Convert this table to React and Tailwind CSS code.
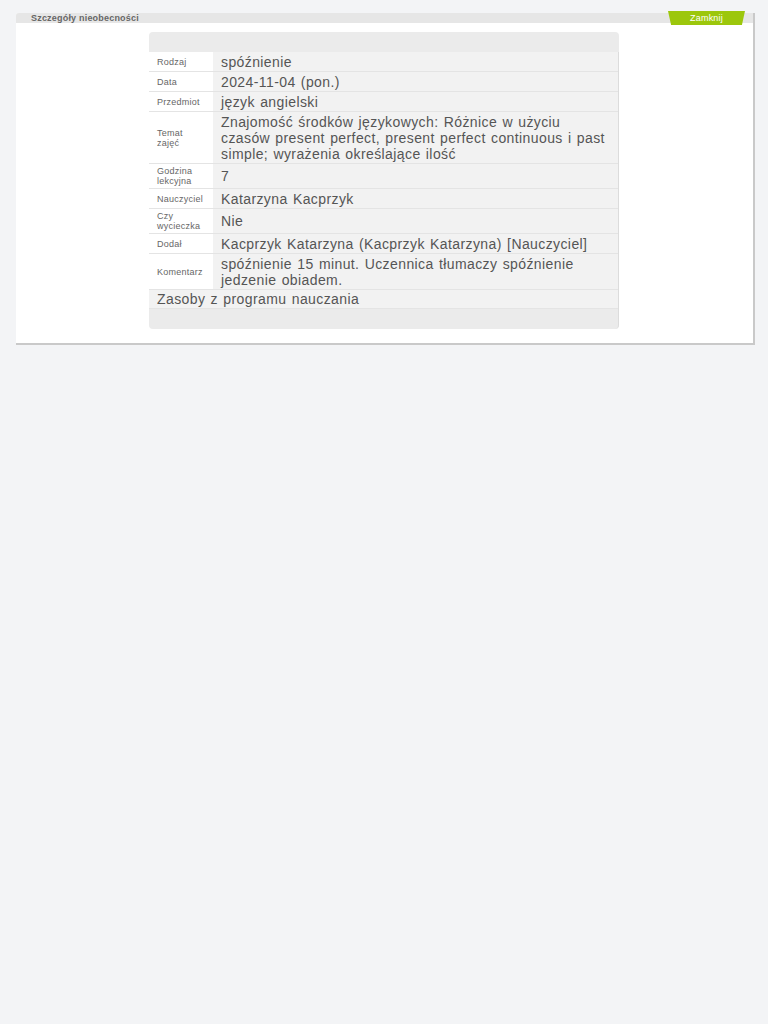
import React from "react";

const rows = [
  { label: "Rodzaj", value: "spóźnienie" },
  { label: "Data", value: "2024-11-04 (pon.)" },
  { label: "Przedmiot", value: "język angielski" },
  {
    label: "Temat zajęć",
    value:
      "Znajomość środków językowych: Różnice w użyciu czasów present perfect, present perfect continuous i past simple; wyrażenia określające ilość",
  },
  { label: "Godzina lekcyjna", value: "7" },
  { label: "Nauczyciel", value: "Katarzyna Kacprzyk" },
  { label: "Czy wycieczka", value: "Nie" },
  { label: "Dodał", value: "Kacprzyk Katarzyna (Kacprzyk Katarzyna) [Nauczyciel]" },
  { label: "Komentarz", value: "spóźnienie 15 minut. Uczennica tłumaczy spóźnienie jedzenie obiadem." },
];

export default function App() {
  return (
    <div className="min-h-[1024px] bg-[#f3f4f6] pt-[13px] px-[16px] font-['Liberation_Sans',Arial,sans-serif]">
      {/* PANEL */}
      <div className="w-[737px] bg-white rounded-tl-[3px] shadow-[1px_1px_0_1px_#c9c9c9]">
        {/* TITLE BAR */}
        <div className="h-[10px] bg-[#e6e6e6] flex items-center justify-between pl-[15px] pr-[8px] rounded-tl-[3px]">
          <span className="text-[9px] leading-[10px] tracking-[0.2px] font-bold text-[#666]">Szczegóły nieobecności</span>
          <button className="h-[14px] w-[77px] -mt-[2px] mb-[-2px] bg-[#9cc70c] text-white text-[9px] tracking-[0.2px] leading-[14px] [clip-path:polygon(0_0,100%_0,96%_100%,4%_100%)]">
            Zamknij
          </button>
        </div>

        {/* CONTENT */}
        <div className="flex justify-center pt-[9px] pb-[14px]">
          <div className="w-[470px] mr-[1px]">
            <div className="h-[20px] bg-[#ebebeb] rounded-t-[4px]"></div>
            <div className="border-r border-[#dcdcdc]">
              {rows.map((r) => (
                <div key={r.label} className="grid grid-cols-[64px_1fr] border-b border-[#e4e4e4]">
                  <div className="bg-white pl-[8px] pr-[8px] flex items-center text-[9px] leading-[10px] tracking-[0.25px] text-[#666] py-[2px]">
                    {r.label}
                  </div>
                  <div className="bg-[#f2f2f2] px-[8px] py-[1.5px] text-[14px] leading-[16px] tracking-[0.4px] [word-spacing:1px] text-[#555] flex items-center">
                    {r.value}
                  </div>
                </div>
              ))}
              <div className="bg-[#f2f2f2] px-[8px] py-[1px] text-[14px] leading-[16px] tracking-[0.4px] [word-spacing:1px] text-[#555] border-b border-[#e4e4e4]">
                Zasoby z programu nauczania
              </div>
            </div>
            <div className="h-[20px] bg-[#ebebeb] rounded-b-[4px] border-r border-[#dcdcdc]"></div>
          </div>
        </div>
      </div>
    </div>
  );
}
